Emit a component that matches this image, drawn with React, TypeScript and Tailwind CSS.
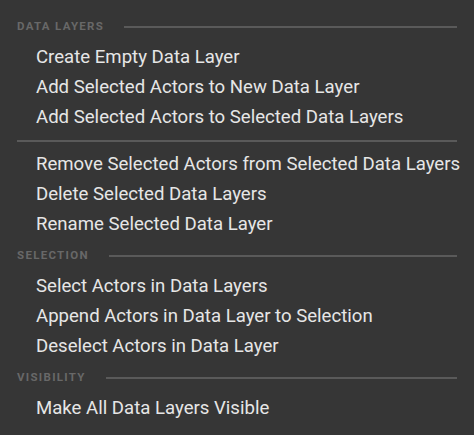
import React from "react";

const Header = ({ label }: { label: string }) => (
  <div className="flex h-[32px] items-center pl-[17px] pr-[17px] pt-[2px]">
    <span className="text-[11.5px] font-bold tracking-[1.3px] text-[#686868] leading-none">{label}</span>
    <div className="ml-[20px] h-[2px] flex-1 bg-[#5a5a5a]" />
  </div>
);

const Item = ({ label }: { label: string }) => (
  <div className="flex h-[30px] items-center whitespace-nowrap pl-[36px] text-[18.6px] leading-none text-[#e6e6e6]">{label}</div>
);

const Sep = () => (
  <div className="flex h-[17px] items-center px-[17px]">
    <div className="h-[2px] w-full bg-[#5a5a5a]" />
  </div>
);

export default function App() {
  return (
    <div
      className="h-[435px] w-[474px] overflow-hidden bg-[#363636] pt-[10px]"
      style={{ fontFamily: "Roboto, 'Noto Sans', sans-serif" }}
    >
      <Header label="DATA LAYERS" />
      <Item label="Create Empty Data Layer" />
      <Item label="Add Selected Actors to New Data Layer" />
      <Item label="Add Selected Actors to Selected Data Layers" />
      <Sep />
      <Item label="Remove Selected Actors from Selected Data Layers" />
      <Item label="Delete Selected Data Layers" />
      <Item label="Rename Selected Data Layer" />
      <Header label="SELECTION" />
      <Item label="Select Actors in Data Layers" />
      <Item label="Append Actors in Data Layer to Selection" />
      <Item label="Deselect Actors in Data Layer" />
      <Header label="VISIBILITY" />
      <Item label="Make All Data Layers Visible" />
    </div>
  );
}
